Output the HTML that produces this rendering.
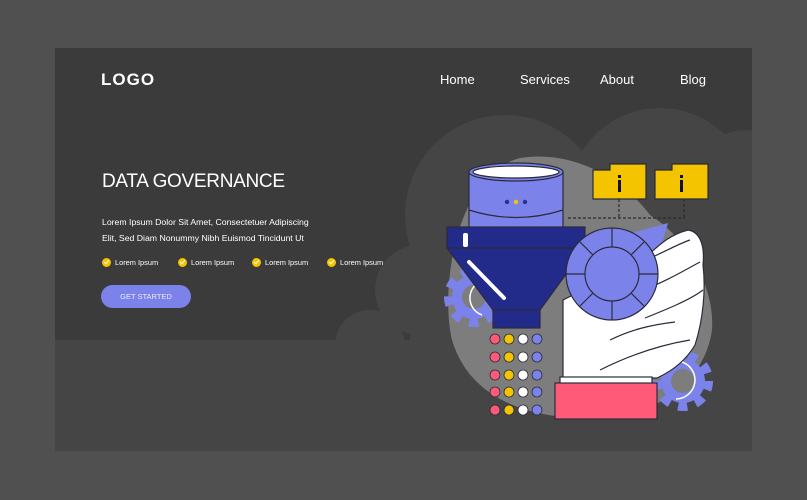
<!DOCTYPE html>
<html><head><meta charset="utf-8"><style>
html,body{margin:0;padding:0;width:807px;height:500px;background:#505050;overflow:hidden;font-family:"Liberation Sans",sans-serif}
.frame{position:absolute;left:55px;top:48px;width:697px;height:403px;background:#3b3b3b;overflow:hidden}
svg.bg{position:absolute;left:0;top:0}
.logo{position:absolute;left:46px;top:22px;color:#fff;font-weight:bold;font-size:17px;letter-spacing:1px}
.nav{position:absolute;top:24px;color:#fff;font-size:13px}
h1{position:absolute;left:47px;top:123px;margin:0;color:#fff;font-weight:normal;font-size:19px;letter-spacing:-0.3px}
.p{position:absolute;left:47px;top:166px;color:#fff;font-size:8.7px;line-height:16px;width:240px}
.chk{position:absolute;top:210px;color:#fff;font-size:7.4px;display:flex;align-items:center}
.chk i{display:inline-block;width:9px;height:9px;border-radius:50%;background:#f5c400;margin-right:4px;position:relative}
.chk i:after{content:"";position:absolute;left:3px;top:1px;width:2px;height:4px;border:solid #fff;border-width:0 1.2px 1.2px 0;transform:rotate(40deg)}
.btn{position:absolute;left:46px;top:237px;width:90px;height:23px;border-radius:12px;background:#7b83eb;color:#e8eaff;font-size:7.5px;text-align:center;line-height:23px}
</style></head><body>
<div class="frame">
<svg class="bg" width="697" height="403" viewBox="55 48 697 403">
 <g fill="#454545">
  <rect x="55" y="340" width="697" height="111"/>
  <circle cx="370" cy="345" r="35"/>
  <circle cx="420" cy="290" r="45"/>
  <circle cx="505" cy="215" r="100"/>
  <circle cx="660" cy="200" r="92"/>
  <circle cx="745" cy="180" r="50"/>
  <rect x="410" y="210" width="342" height="150"/>
 </g>
 <path d="M520 158 C570 150 620 175 650 215 C690 240 715 290 712 330 C705 380 660 415 600 418 C530 420 470 400 452 340 C440 290 455 175 520 158Z" fill="#7d7d7d"/>
 <!-- gears -->
 <g fill="none" stroke="#7b83eb">
  <circle cx="474" cy="297" r="25" stroke-width="10" stroke-dasharray="9 8.5"/>
  <circle cx="683" cy="381" r="25" stroke-width="10" stroke-dasharray="9 8.5"/>
 </g>
 <circle cx="474" cy="297" r="22" fill="#7b83eb"/>
 <circle cx="683" cy="381" r="22" fill="#7b83eb"/>
 <circle cx="474" cy="297" r="12" fill="#7d7d7d"/>
 <circle cx="683" cy="381" r="12" fill="#7d7d7d"/>
 <path d="M488 280 A18 18 0 0 0 482 315" fill="none" stroke="#fff" stroke-width="1.5"/>
 <path d="M682 362 A19 19 0 0 1 676 399" fill="none" stroke="#fff" stroke-width="1.5"/>
 <g stroke="#2b2b3a" stroke-width="1.2">
  <path d="M469 172 L469 228 L563 228 L563 172Z" fill="#7b83eb"/>
  <path d="M469 210 Q516 225 563 210" fill="none"/>
  <ellipse cx="516" cy="172" rx="47" ry="9" fill="#7b83eb"/>
  <ellipse cx="516" cy="172" rx="43" ry="6" fill="#fff"/>
  <circle cx="507" cy="202" r="2.2" fill="#2b2f8a" stroke="none"/><circle cx="516" cy="202" r="2.2" fill="#f5c400" stroke="none"/><circle cx="525" cy="202" r="2.2" fill="#2b2f8a" stroke="none"/>
  <rect x="447" y="227" width="138" height="21" fill="#222a8a"/>
  <path d="M447 248 L585 248 L540 310 L493 310Z" fill="#222a8a"/>
  <rect x="493" y="310" width="47" height="18" fill="#222a8a"/>
  <path d="M568 218 H685 M619 199 V218 M684 199 V218" fill="none" stroke="#2b2b2b" stroke-dasharray="3 2"/>
  <path d="M593 170 H610 V164 H646 V199 H593Z" fill="#f5c400"/>
  <path d="M655 170 H672 V164 H708 V199 H655Z" fill="#f5c400"/>
  <path d="M628 234 L668 223 L655 268Z" fill="#7b83eb" stroke="none"/>
  <path d="M563 378 L563 300 L640 262 C655 250 665 236 688 230 C700 232 705 245 703 265 C706 290 703 320 695 345 C685 362 670 372 657 378Z" fill="#fff"/>
  <path d="M640 262 C660 255 675 245 690 240 M643 290 C665 282 685 270 700 262 M645 318 C665 310 690 300 703 290 M610 340 C630 330 650 325 675 322 M600 370 C630 355 660 345 690 340" fill="none"/>
  <circle cx="612" cy="274" r="46" fill="#7b83eb"/>
  <circle cx="612" cy="274" r="27" fill="#7b83eb"/>
  <path d="M612 228 V247 M612 301 V320 M566 274 H585 M639 274 H658 M580 242 L593 255 M631 293 L644 306 M644 242 L631 255 M593 293 L580 306" fill="none"/>
  <rect x="560" y="377" width="92" height="7" fill="#fff"/>
  <rect x="555" y="383" width="102" height="36" fill="#ff5a78"/>
 </g>
 <rect x="463" y="233" width="5" height="14" rx="2" fill="#fff"/>
 <path d="M469 262 L504 298" stroke="#fff" stroke-width="4" stroke-linecap="round"/>
 <rect x="618" y="175" width="3" height="3" fill="#111"/><rect x="618" y="180" width="3" height="12" fill="#111"/>
 <rect x="680" y="175" width="3" height="3" fill="#111"/><rect x="680" y="180" width="3" height="12" fill="#111"/>
 <g stroke="#2b2b3a" stroke-width="0.8">
  <g fill="#ff5a78"><circle cx="495" cy="339" r="5"/><circle cx="495" cy="357" r="5"/><circle cx="495" cy="375" r="5"/><circle cx="495" cy="392" r="5"/><circle cx="495" cy="410" r="5"/></g>
  <g fill="#f5c400"><circle cx="509" cy="339" r="5"/><circle cx="509" cy="357" r="5"/><circle cx="509" cy="375" r="5"/><circle cx="509" cy="392" r="5"/><circle cx="509" cy="410" r="5"/></g>
  <g fill="#fff"><circle cx="523" cy="339" r="5"/><circle cx="523" cy="357" r="5"/><circle cx="523" cy="375" r="5"/><circle cx="523" cy="392" r="5"/><circle cx="523" cy="410" r="5"/></g>
  <g fill="#7b83eb"><circle cx="537" cy="339" r="5"/><circle cx="537" cy="357" r="5"/><circle cx="537" cy="375" r="5"/><circle cx="537" cy="392" r="5"/><circle cx="537" cy="410" r="5"/></g>
 </g>
</svg>
<div class="logo">LOGO</div>
<div class="nav" style="left:385px">Home</div>
<div class="nav" style="left:465px">Services</div>
<div class="nav" style="left:545px">About</div>
<div class="nav" style="left:625px">Blog</div>
<h1>DATA GOVERNANCE</h1>
<div class="p">Lorem Ipsum Dolor Sit Amet, Consectetuer Adipiscing<br>Elit, Sed Diam Nonummy Nibh Euismod Tincidunt Ut</div>
<div class="chk" style="left:47px"><i></i>Lorem Ipsum</div>
<div class="chk" style="left:123px"><i></i>Lorem Ipsum</div>
<div class="chk" style="left:197px"><i></i>Lorem Ipsum</div>
<div class="chk" style="left:272px"><i></i>Lorem Ipsum</div>
<div class="btn">GET STARTED</div>
</div>
</body></html>
